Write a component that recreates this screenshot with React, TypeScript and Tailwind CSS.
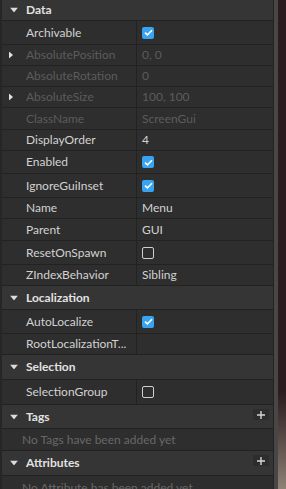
import React from "react";

type Row =
  | { kind: "header"; label: string; h: string; plus?: boolean }
  | { kind: "prop"; label: string; h: string; value?: string; check?: boolean; disabled?: boolean; expand?: boolean }
  | { kind: "empty"; label: string; h: string };

const rows: Row[] = [
  { kind: "header", label: "Data", h: "h-[21px]" },
  { kind: "prop", label: "Archivable", check: true, h: "h-[24px]" },
  { kind: "prop", label: "AbsolutePosition", value: "0, 0", disabled: true, expand: true, h: "h-[21px]" },
  { kind: "prop", label: "AbsoluteRotation", value: "0", disabled: true, h: "h-[21px]" },
  { kind: "prop", label: "AbsoluteSize", value: "100, 100", disabled: true, expand: true, h: "h-[21px]" },
  { kind: "prop", label: "ClassName", value: "ScreenGui", disabled: true, h: "h-[22px]" },
  { kind: "prop", label: "DisplayOrder", value: "4", h: "h-[21px]" },
  { kind: "prop", label: "Enabled", check: true, h: "h-[23px]" },
  { kind: "prop", label: "IgnoreGuiInset", check: true, h: "h-[24px]" },
  { kind: "prop", label: "Name", value: "Menu", h: "h-[21px]" },
  { kind: "prop", label: "Parent", value: "GUI", h: "h-[22px]" },
  { kind: "prop", label: "ResetOnSpawn", check: false, h: "h-[24px]" },
  { kind: "prop", label: "ZIndexBehavior", value: "Sibling", h: "h-[21px]" },
  { kind: "header", label: "Localization", h: "h-[24px]" },
  { kind: "prop", label: "AutoLocalize", check: true, h: "h-[24px]" },
  { kind: "prop", label: "RootLocalizationT...", value: "", h: "h-[21px]" },
  { kind: "header", label: "Selection", h: "h-[25px]" },
  { kind: "prop", label: "SelectionGroup", check: false, h: "h-[25px]" },
  { kind: "header", label: "Tags", plus: true, h: "h-[24px]" },
  { kind: "empty", label: "No Tags have been added yet", h: "h-[22px]" },
  { kind: "header", label: "Attributes", plus: true, h: "h-[25px]" },
  { kind: "empty", label: "No Attribute has been added yet", h: "h-[24px]" },
];

function Checkbox({ on }: { on: boolean }) {
  if (!on) {
    return <div className="w-[12px] h-[12px] rounded-[2px] border border-[#d0d0d0]" />;
  }
  return (
    <div className="w-[12px] h-[12px] rounded-[2px] bg-[#38a3f1] flex items-center justify-center">
      <svg width="9" height="7" viewBox="0 0 9 7">
        <path d="M1 3.6 L3.4 5.8 L8 1.2" fill="none" stroke="#fff" strokeWidth="1.6" />
      </svg>
    </div>
  );
}

function Header({ label, h, plus }: { label: string; h: string; plus?: boolean }) {
  return (
    <div className={`${h} shrink-0 flex items-center bg-[#353535] border-b border-[#222222] relative`}>
      <svg width="8" height="5" viewBox="0 0 8 5" className="absolute left-[8px] top-1/2 -translate-y-1/2">
        <path d="M0 0 H8 L4 5 Z" fill="#dcdcdc" />
      </svg>
      <span className="pl-[24px] font-bold text-[#e2e2e2]">{label}</span>
      {plus && (
        <div className="absolute left-[251px] top-[4px] w-[16px] h-[11px] bg-[#2d2d2d] flex items-center justify-center">
          <svg width="8" height="8" viewBox="0 0 8 8">
            <path d="M4 0 V8 M0 4 H8" stroke="#d6d6d6" strokeWidth="1.4" />
          </svg>
        </div>
      )}
    </div>
  );
}

export default function App() {
  return (
    <div
      className="w-[286px] h-[489px] overflow-hidden flex bg-[#2e2e2e] text-[12px] leading-none"
      style={{ fontFamily: "Lato, 'Noto Sans', sans-serif" }}
    >
      <div className="w-[273px] flex flex-col border-l-2 border-[#262626] shrink-0">
        {rows.map((r, i) => {
          if (r.kind === "header") return <Header key={i} label={r.label} h={r.h} plus={r.plus} />;
          if (r.kind === "empty")
            return (
              <div key={i} className={`${r.h} shrink-0 flex items-center border-b border-[#222222] pl-[20px] text-[#686868] whitespace-nowrap`}>
                {r.label}
              </div>
            );
          const txt = r.disabled ? "text-[#5c5c5c]" : "text-[#d2d2d2]";
          return (
            <div key={i} className={`${r.h} shrink-0 flex border-b border-[#222222]`}>
              <div className={`w-[135px] shrink-0 relative flex items-center pl-[24px] border-r border-[#222222] whitespace-nowrap ${txt}`}>
                {r.expand && (
                  <svg width="4" height="7" viewBox="0 0 4 7" className="absolute left-[7px] top-1/2 -translate-y-1/2">
                    <path d="M0 0 L4 3.5 L0 7 Z" fill="#e0e0e0" />
                  </svg>
                )}
                {r.label}
              </div>
              <div className={`flex-1 flex items-center pl-[5px] whitespace-nowrap ${txt}`}>
                {r.check !== undefined ? <Checkbox on={r.check} /> : r.value}
              </div>
            </div>
          );
        })}
      </div>
      <div className="w-[1px] bg-[#232323] shrink-0" />
      <div className="w-[4px] bg-[#474747] shrink-0" />
      <div className="flex-1 bg-gradient-to-b from-[#2a1c1f] via-[#2a1c1f] via-80% to-[#8f8276]" />
    </div>
  );
}
